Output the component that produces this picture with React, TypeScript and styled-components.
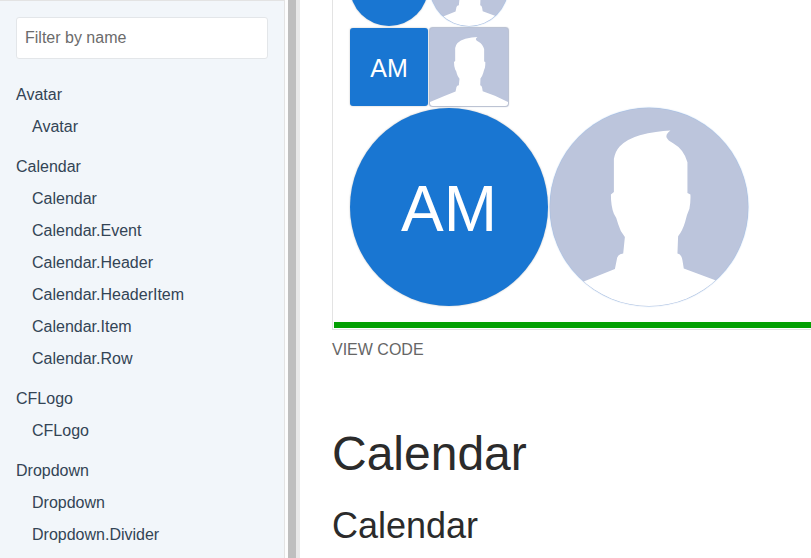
import styled, { createGlobalStyle } from "styled-components";

const groups = [
  { name: "Avatar", items: ["Avatar"] },
  {
    name: "Calendar",
    items: [
      "Calendar",
      "Calendar.Event",
      "Calendar.Header",
      "Calendar.HeaderItem",
      "Calendar.Item",
      "Calendar.Row",
    ],
  },
  { name: "CFLogo", items: ["CFLogo"] },
  { name: "Dropdown", items: ["Dropdown", "Dropdown.Divider"] },
];

const GlobalStyle = createGlobalStyle`
  html, body {
    margin: 0;
    padding: 0;
    background: white;
  }
  body {
    font-family: "Liberation Sans", Arial, sans-serif;
    overflow: hidden;
  }
`;

const Silhouette = () => (
  <AvatarImage viewBox="30 22 595 596" preserveAspectRatio="none" aria-hidden="true">
    <path
      fill="#fff"
      d="M392 90 Q378 100 380 110 Q384 120 400 128 Q432 146 443 185 L443 278 L452 282 Q453 305 449 325 Q440 345 436 365 Q428 392 415 408 L413 460 Q425 462 428 480 L432 505 L525 540 L625 588 L625 618 L30 618 L30 588 L135 543 L225 507 L232 472 Q236 462 250 460 L255 410 Q240 392 235 372 Q231 352 222 340 Q213 318 213 282 L222 275 L222 175 Q226 152 240 137 Q262 115 300 104 Q350 92 392 90 Z"
    />
  </AvatarImage>
);

export default function App() {
  return (
    <Page>
      <GlobalStyle />
      <Sidebar>
        <FilterInput placeholder="Filter by name" />
        {groups.map((group) => (
          <Group key={group.name}>
            <GroupTitle>{group.name}</GroupTitle>
            {group.items.map((item) => (
              <GroupItem key={item}>{item}</GroupItem>
            ))}
          </Group>
        ))}
      </Sidebar>
      <ResizeGap />
      <ResizeBar />
      <ResizeEdge />
      <Content>
        <Preview>
          <AvatarRow>
            <Avatar $size={78} $round />
            <Avatar $size={78} $round $picture>
              <Silhouette />
            </Avatar>
          </AvatarRow>
          <AvatarRow>
            <Avatar $size={78}>AM</Avatar>
            <Avatar $size={78} $picture>
              <Silhouette />
            </Avatar>
          </AvatarRow>
          <AvatarRow>
            <Avatar $size={198} $round>
              AM
            </Avatar>
            <Avatar $size={198} $round $picture>
              <Silhouette />
            </Avatar>
          </AvatarRow>
          <StatusBar />
        </Preview>
        <ViewCode>VIEW CODE</ViewCode>
        <SectionTitle>Calendar</SectionTitle>
        <ComponentTitle>Calendar</ComponentTitle>
      </Content>
    </Page>
  );
}

const Page = styled.div`
  display: flex;
  width: 811px;
  height: 558px;
  overflow: hidden;
`;

const Sidebar = styled.nav`
  width: 285px;
  flex-shrink: 0;
  box-sizing: border-box;
  padding: 17px 16px 0;
  background: #f2f6fa;
  border-top: 1px solid #e3e3e3;
  border-right: 1px solid #e3e3e3;
  overflow: hidden;
`;

const FilterInput = styled.input`
  display: block;
  box-sizing: border-box;
  width: 252px;
  height: 42px;
  margin: -1px 0 20px;
  padding: 0 8px;
  background: white;
  border: 1px solid #e3e6e9;
  border-radius: 3px;
  font-family: "Liberation Sans", Arial, sans-serif;
  font-size: 16px;
  color: #333;
  outline: none;

  &::placeholder {
    color: #6b6b6b;
    opacity: 1;
  }
`;

const Group = styled.div`
  margin-bottom: 8px;
`;

const GroupTitle = styled.div`
  height: 32px;
  line-height: 32px;
  font-size: 16px;
  color: #334455;
`;

const GroupItem = styled(GroupTitle)`
  padding-left: 16px;
`;

const ResizeGap = styled.div`
  width: 3px;
  flex-shrink: 0;
  background: #fdfdfd;
`;

const ResizeBar = styled.div`
  width: 8px;
  flex-shrink: 0;
  background: #bfbfbf;
`;

const ResizeEdge = styled.div`
  width: 4px;
  flex-shrink: 0;
  background: #e9e9e9;
`;

const Content = styled.main`
  flex: 1;
  min-width: 0;
  padding-left: 32px;
  overflow: hidden;
  color: #2b2b2b;
`;

const Preview = styled.div`
  width: 600px;
  margin-top: -53px;
  box-sizing: border-box;
  padding: 0 0 0 16px;
  border: 1px solid #e3e3e3;
  border-top: none;
`;

const AvatarRow = styled.div`
  display: flex;
`;

const Avatar = styled.div<{ $size: number; $round?: boolean; $picture?: boolean }>`
  box-sizing: border-box;
  width: ${(p) => p.$size}px;
  height: ${(p) => p.$size}px;
  margin: 1px;
  padding-top: ${(p) => Math.round(p.$size * 0.02)}px;
  flex-shrink: 0;
  display: flex;
  align-items: center;
  justify-content: center;
  overflow: hidden;
  border-radius: ${(p) => (p.$round ? "50%" : "3px")};
  background: ${(p) => (p.$picture ? "#bcc5dc" : "#1976d2")};
  box-shadow: ${(p) =>
    p.$picture
      ? p.$round
        ? "0 0 1px 0.5px rgba(120, 160, 215, 0.75)"
        : "0 0 1px 0.5px rgba(150, 160, 185, 0.7)"
      : "0 0 2px 0 rgba(0, 0, 0, 0.25)"};
  color: white;
  font-size: ${(p) => Math.round(p.$size * 0.325)}px;

  ${(p) => p.$picture && "padding-top: 0;"}
`;

const AvatarImage = styled.svg`
  display: block;
  width: 100%;
  height: 100%;
`;

const StatusBar = styled.div`
  height: 6px;
  margin: 15px 0 1px -15px;
  background: #03a003;
`;

const ViewCode = styled.div`
  margin-top: 11px;
  line-height: 18px;
  font-size: 16px;
  color: #666;
`;

const SectionTitle = styled.h1`
  margin: 67px 0 0;
  font-size: 48px;
  line-height: 56px;
  font-weight: 400;
`;

const ComponentTitle = styled.h2`
  margin: 24px 0 0;
  font-size: 36px;
  line-height: 40px;
  font-weight: 400;
`;
